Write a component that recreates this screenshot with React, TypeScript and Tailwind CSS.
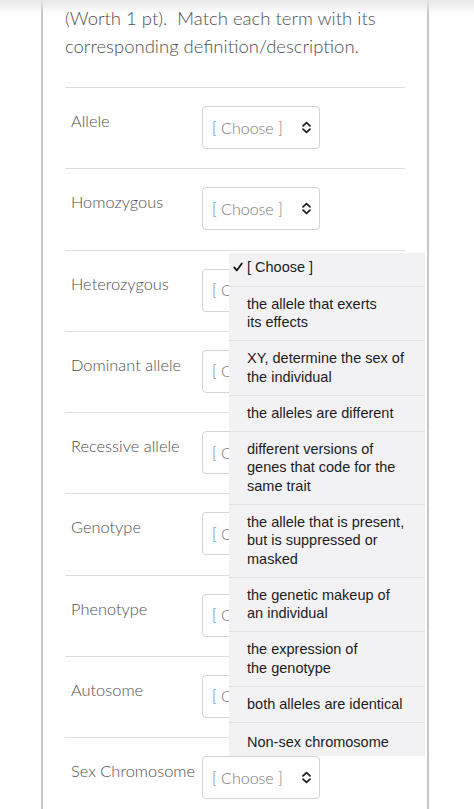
const terms = [
  "Allele",
  "Homozygous",
  "Heterozygous",
  "Dominant allele",
  "Recessive allele",
  "Genotype",
  "Phenotype",
  "Autosome",
  "Sex Chromosome",
];

const options: string[][] = [
  ["the allele that exerts", "its effects"],
  ["XY, determine the sex of", "the individual"],
  ["the alleles are different"],
  ["different versions of", "genes that code for the", "same trait"],
  ["the allele that is present,", "but is suppressed or", "masked"],
  ["the genetic makeup of", "an individual"],
  ["the expression of", "the genotype"],
  ["both alleles are identical"],
  ["Non-sex chromosome"],
];

function UpDown() {
  return (
    <svg width="11" height="13" viewBox="0 0 11 13" fill="none" stroke="#222" strokeWidth="1.8" strokeLinecap="round" strokeLinejoin="round">
      <path d="M2 4.8 L5.5 1.6 L9 4.8" />
      <path d="M2 8.2 L5.5 11.4 L9 8.2" />
    </svg>
  );
}

function ChooseSelect() {
  return (
    <div className="flex h-[43px] w-[118px] items-center justify-between rounded-[4px] border border-[#d3d3d3] bg-white pl-[9px] pr-[7px]">
      <span className="text-[16px] font-light text-[#777]">[ Choose ]</span>
      <UpDown />
    </div>
  );
}

export default function App() {
  return (
    <div className="relative min-h-[809px] w-[474px] overflow-hidden bg-white" style={{ fontFamily: "Lato, 'Open Sans', sans-serif" }}>
      <div className="pointer-events-none absolute inset-x-0 top-0 h-[14px] bg-gradient-to-b from-[#e6e6e6] to-transparent" />

      <div className="ml-[41px] w-[388px] border-x-2 border-[#c8c8c8] px-[22px] pt-[4px]">
        <p className="text-[18.5px] font-light leading-[28px] text-[#4f4f4f]">
          (Worth 1 pt).&nbsp; Match each term with its corresponding definition/description.
        </p>

        <div className="mt-[27px]">
          {terms.map((term) => (
            <div key={term} className="flex border-t border-[#dedede] pt-[18px] pb-[19.25px]">
              <div className="w-[137px] pl-[6px] pt-[3px] text-[16.4px] font-light leading-[24px] text-[#4f4f4f]">{term}</div>
              <ChooseSelect />
            </div>
          ))}
        </div>
      </div>

      <div
        className="absolute left-[229px] top-[253px] w-[196px] bg-[#f2f2f4] text-[14.5px] leading-[18.5px] text-[#1c1c1e]"
        style={{ fontFamily: "'Liberation Sans', Arial, sans-serif" }}
      >
        <div className="flex items-center pt-[5px] pb-[9px]">
          <span className="flex w-[18px] justify-center">
            <svg width="10" height="10" viewBox="0 0 10 10" fill="none" stroke="#111" strokeWidth="1.7" strokeLinecap="round" strokeLinejoin="round">
              <path d="M1.2 5.4 L3.8 8.4 L8.8 1.4" />
            </svg>
          </span>
          <span>[ Choose ]</span>
        </div>
        {options.map((lines, i) => (
          <div
            key={lines[0]}
            className={`border-t border-[#e1e1e4] pl-[18px] ${i === options.length - 1 ? "pt-[10px] pb-[5px]" : "pt-[8.25px] pb-[8.25px]"}`}
          >
            {lines.map((line) => (
              <div key={line} className="whitespace-nowrap">
                {line}
              </div>
            ))}
          </div>
        ))}
      </div>
    </div>
  );
}
